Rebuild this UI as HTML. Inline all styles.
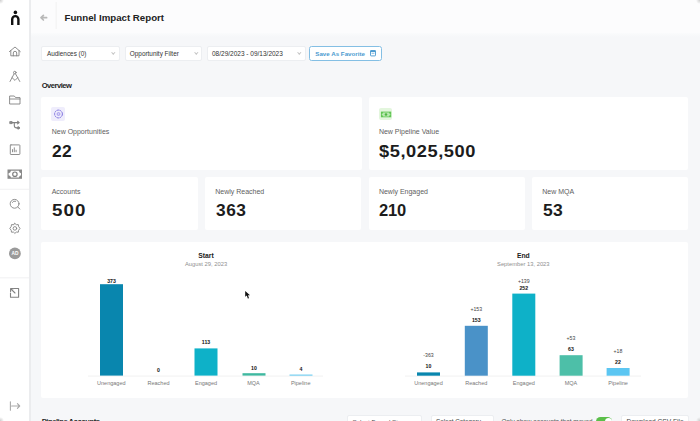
<!DOCTYPE html>
<html><head><meta charset="utf-8">
<style>
*{box-sizing:border-box;margin:0;padding:0}
html,body{width:700px;height:421px;overflow:hidden;background:#f6f7f9;font-family:"Liberation Sans",sans-serif;color:#1a1a1a}
#side{position:absolute;left:0;top:0;width:31px;height:421px;background:#fff;border-right:2px solid #ebecee}
#hdr{position:absolute;left:31px;top:0;width:669px;height:33px;background:#fcfcfd}
#hgrad{position:absolute;left:31px;top:33px;width:669px;height:4px;background:linear-gradient(#fafbfc,#f6f7f9)}
.t{position:absolute;white-space:nowrap;line-height:1}
.dd{position:absolute;top:46px;height:15.3px;background:#fff;border:1px solid #eceef1;border-radius:2px}
.chev{position:absolute;width:2.6px;height:2.6px;border-right:0.8px solid #c4c4c4;border-bottom:0.8px solid #c4c4c4;transform:rotate(45deg)}
.card{position:absolute;background:#fff;border-radius:2px}
.lbl{position:absolute;font-size:7px;color:#5e5e5e;white-space:nowrap;line-height:1}
.num{position:absolute;font-weight:700;color:#1c1c1c;white-space:nowrap;line-height:1}
.bar{position:absolute}
.bl{position:absolute;font-size:5.2px;font-weight:700;color:#111;white-space:nowrap;line-height:1;transform:translateX(-50%)}
.dl{position:absolute;font-size:5.2px;color:#444;white-space:nowrap;line-height:1;transform:translateX(-50%)}
.al{position:absolute;font-size:5.5px;color:#777;white-space:nowrap;line-height:1;transform:translateX(-50%)}
svg{position:absolute;left:0;top:0;overflow:visible}
</style></head><body>
<div id="side"></div>
<div id="hdr"></div><div id="hgrad"></div>
<svg width="700" height="421" viewBox="0 0 700 421">
  <!-- logo -->
  <circle cx="15.4" cy="12.4" r="1.8" fill="#111"/>
  <path d="M12.2 25 V19.2 A3.1 3.1 0 0 1 18.4 19.2 V25" fill="none" stroke="#111" stroke-width="2.4"/>
  <g fill="none" stroke="#828282" stroke-width="0.9" stroke-linejoin="round" stroke-linecap="round">
    <!-- home -->
    <path d="M9.4 51.6 L15 47 L20.3 51.6 M10.8 50.5 V55.8 H19 V50.5 M13.3 55.8 V53 A1.7 1.7 0 0 1 16.7 53 V55.8"/>
    <!-- people/tree -->
    <circle cx="14.8" cy="72.6" r="1.3"/>
    <path d="M14 74 L10 81.5 M15.6 74 L19.8 81.5 M12 77.6 L15 80.4 L17.8 77.6"/>
    <!-- folder -->
    <path d="M10 96 H14.3 L15.6 97.6 H20 V104 H10 Z M10 99 H20"/>
    <!-- connector -->
    <path d="M11.2 122.6 H19 M17.6 121.3 L19.2 122.6 L17.6 123.9 M14.3 122.6 V125.5 Q14.3 127.9 16.8 127.9" stroke-width="1.1"/>
    <rect x="10.1" y="121.6" width="2" height="2" fill="#8a8a8a"/>
    <circle cx="18.3" cy="127.9" r="1.2" fill="#8a8a8a"/>
    <!-- chart -->
    <rect x="10.3" y="144.9" width="9.6" height="9.6" rx="0.6"/>
    <path d="M12.5 151.8 V149.6 M14.3 151.8 V147.8 M16.1 151.8 V150.2"/>
    <!-- money -->
    <rect x="7.5" y="169.5" width="14.5" height="9.3" fill="#8a8a8a" stroke="none"/>
    <path d="M11 170.7 H18.9 Q19.3 172.9 21 173.2 V175.2 Q19.3 175.5 18.9 177.6 H11 Q10.6 175.5 8.6 175.2 V173.2 Q10.6 172.9 11 170.7 Z" fill="#fff" stroke="none"/>
    <circle cx="14.9" cy="174.2" r="2.2" stroke-width="1.2" stroke="#808080"/>
    <!-- search -->
    <circle cx="14.6" cy="203.8" r="4.4"/>
    <path d="M17.8 207 L19.8 209 M12.4 202.4 A2.6 2.6 0 0 1 15.6 201.2"/>
    <!-- gear -->
    <path d="M14.9 223.4 L16.3 224.7 L18.3 224.6 L18.6 226.5 L20 228.4 L18.6 230.3 L18.3 232.2 L16.3 232.1 L14.9 233.4 L13.5 232.1 L11.5 232.2 L11.2 230.3 L9.8 228.4 L11.2 226.5 L11.5 224.6 L13.5 224.7 Z"/>
    <circle cx="14.9" cy="228.4" r="1.8"/>
    <!-- exit -->
    <path d="M10.5 293 V297.2 H18.6 V288.5 H14.2 M10.6 288.6 L15 293 M10.6 291.5 V288.6 H13.5" stroke-width="1.1"/>
    <!-- collapse -->
    <path d="M10.4 401.8 V410.2 M11.6 406 H19.6 M17.4 403.7 L19.7 406 L17.4 408.3" stroke="#a9a9a9" stroke-width="1.1"/>
    <!-- header back arrow & divider -->
    <path d="M46.6 17.7 H41.2 M43.4 15.4 L41 17.7 L43.4 20" stroke="#b8b8b8" stroke-width="1.7"/>
  </g>
  <circle cx="14.9" cy="253.4" r="5.9" fill="#9a9a9a"/>
  <line x1="0" y1="189.3" x2="29" y2="189.3" stroke="#eeeeef" stroke-width="0.8"/>
  <line x1="0" y1="277.8" x2="29" y2="277.8" stroke="#eeeeef" stroke-width="0.8"/>
  <line x1="56.2" y1="2" x2="56.2" y2="29" stroke="#efefef" stroke-width="0.8"/>
</svg>
<div class="t" style="left:11.5px;top:251.6px;font-size:4.8px;font-weight:700;color:#fff">AD</div>

<div class="t" style="left:64.5px;top:13.3px;font-size:9.7px;font-weight:700;color:#222">Funnel Impact Report</div>

<!-- filters -->
<div class="dd" style="left:41px;width:79px"><div class="t" style="left:5px;top:3.7px;font-size:6.4px;color:#333">Audiences (0)</div><div class="chev" style="left:70px;top:4px"></div></div>
<div class="dd" style="left:125px;width:77px"><div class="t" style="left:3.8px;top:3.7px;font-size:6.4px;color:#333">Opportunity Filter</div><div class="chev" style="left:68.5px;top:4px"></div></div>
<div class="dd" style="left:207px;width:99px"><div class="t" style="left:4px;top:3.7px;font-size:6.5px;color:#333">08/29/2023 - 09/13/2023</div><div class="chev" style="left:90px;top:4px"></div></div>
<div class="dd" style="left:309px;width:72.7px;border:1px solid #84bfe4;border-radius:2.5px"><div class="t" style="left:5.3px;top:3.8px;font-size:6.2px;font-weight:700;color:#4c9bd0">Save As Favorite</div>
  <svg width="8" height="8" style="left:59.8px;top:3.4px"><rect x="0.5" y="0.5" width="5" height="5.4" rx="0.5" fill="none" stroke="#4c9bd0" stroke-width="0.9"/><rect x="0.5" y="0.5" width="5" height="1.6" fill="#4c9bd0"/><line x1="1.6" y1="3.4" x2="4.4" y2="3.4" stroke="#4c9bd0" stroke-width="0.6"/></svg>
</div>

<div class="t" style="left:41.7px;top:81.6px;font-size:7.6px;font-weight:700;color:#1e1e1e;letter-spacing:-0.5px">Overview</div>

<!-- cards row 1 -->
<div class="card" style="left:41px;top:97px;width:320.5px;height:73px"></div>
<div class="card" style="left:368.5px;top:97px;width:319.5px;height:73px"></div>
<div class="card" style="left:41px;top:177px;width:156.5px;height:52.5px"></div>
<div class="card" style="left:204.5px;top:177px;width:156.5px;height:52.5px"></div>
<div class="card" style="left:368.5px;top:177px;width:156.5px;height:52.5px"></div>
<div class="card" style="left:531.5px;top:177px;width:156.5px;height:52.5px"></div>

<div style="position:absolute;left:51.1px;top:107px;width:14px;height:13.5px;background:#efedfc;border-radius:2px"></div>
<svg width="700" height="421"><circle cx="58.5" cy="114" r="3.9" fill="none" stroke="#7d70df" stroke-width="1" stroke-dasharray="2.2 0.5"/><circle cx="58.5" cy="114" r="1.5" fill="#d4cef7" stroke="#8a7ee6" stroke-width="0.6"/></svg>
<div style="position:absolute;left:378.9px;top:107.8px;width:13.4px;height:12.2px;background:#e3f6dd;border-radius:2px"></div>
<svg width="700" height="421"><rect x="380.9" y="111.6" width="10.3" height="5.7" fill="#62c655"/><path d="M383.2 112.5 H388.9 Q389.2 113.9 390.3 114 V114.9 Q389.2 115 388.9 116.4 H383.2 Q382.9 115 381.8 114.9 V114 Q382.9 113.9 383.2 112.5 Z" fill="#b9e8b1"/><circle cx="386" cy="114.45" r="1.3" fill="#4fb842"/></svg>

<div class="lbl" style="left:51.7px;top:128.2px">New Opportunities</div>
<div class="num" style="left:51.7px;top:143.3px;font-size:16.5px;letter-spacing:0.3px;transform:scaleX(1.055);transform-origin:0 0">22</div>
<div class="lbl" style="left:378.9px;top:128.2px">New Pipeline Value</div>
<div class="num" style="left:378.9px;top:142.8px;font-size:16.5px;letter-spacing:0.5px;transform:scaleX(1.106);transform-origin:0 0">$5,025,500</div>

<div class="lbl" style="left:51.7px;top:188.2px">Accounts</div>
<div class="num" style="left:52.1px;top:201.8px;font-size:16.5px;letter-spacing:1px;transform:scaleX(1.135);transform-origin:0 0">500</div>
<div class="lbl" style="left:215.2px;top:188.2px">Newly Reached</div>
<div class="num" style="left:215.5px;top:201.8px;font-size:16.5px;letter-spacing:0.5px;transform:scaleX(1.05);transform-origin:0 0">363</div>
<div class="lbl" style="left:378.9px;top:188.2px">Newly Engaged</div>
<div class="num" style="left:379px;top:201.8px;font-size:16.5px;letter-spacing:-0.15px">210</div>
<div class="lbl" style="left:542.2px;top:188.2px">New MQA</div>
<div class="num" style="left:542.8px;top:201.8px;font-size:16.5px;letter-spacing:0.3px;transform:scaleX(1.06);transform-origin:0 0">53</div>

<!-- chart card -->
<div class="card" style="left:41px;top:241.5px;width:647px;height:156.5px"></div>
<div class="t" style="left:206px;top:252.5px;font-size:6.8px;font-weight:700;color:#222;transform:translateX(-50%)">Start</div>
<div class="t" style="left:206px;top:262.1px;font-size:5.8px;color:#8f8f8f;transform:translateX(-50%)">August 29, 2023</div>
<div class="t" style="left:523.3px;top:252.5px;font-size:6.8px;font-weight:700;color:#222;transform:translateX(-50%)">End</div>
<div class="t" style="left:523.3px;top:262.1px;font-size:5.8px;color:#8f8f8f;transform:translateX(-50%)">September 13, 2023</div>

<svg width="700" height="421">
  <line x1="88" y1="376.1" x2="323" y2="376.1" stroke="#ebebeb" stroke-width="0.7"/>
  <line x1="405" y1="376.1" x2="641" y2="376.1" stroke="#ebebeb" stroke-width="0.7"/>
  <!-- start bars -->
  <rect x="100" y="284.2" width="23" height="91.4" fill="#0986ae"/>
  <rect x="194.5" y="348.4" width="23" height="27.2" fill="#0eb1c8"/>
  <rect x="242.5" y="373.2" width="23" height="2.4" fill="#3fb8a0"/>
  <rect x="289.5" y="374.6" width="23" height="1" fill="#5cc6ee"/>
  <!-- end bars -->
  <rect x="417" y="372.4" width="23" height="3.3" fill="#0986ae"/>
  <rect x="464.8" y="325.8" width="23" height="49.9" fill="#4a92c8"/>
  <rect x="512.3" y="293.6" width="23" height="82.1" fill="#0eb1c8"/>
  <rect x="559.6" y="355.2" width="23" height="20.5" fill="#4dbfa8"/>
  <rect x="606.6" y="368" width="23" height="7.7" fill="#5cc6f2"/>
</svg>
<!-- bar labels start -->
<div class="bl" style="left:111.5px;top:279.4px">373</div>
<div class="bl" style="left:158.5px;top:368.2px">0</div>
<div class="bl" style="left:206px;top:340.2px">113</div>
<div class="bl" style="left:254px;top:365.8px">10</div>
<div class="bl" style="left:301px;top:367.0px">4</div>
<div class="al" style="left:111.3px;top:380.7px">Unengaged</div>
<div class="al" style="left:158.5px;top:380.7px">Reached</div>
<div class="al" style="left:206px;top:380.7px">Engaged</div>
<div class="al" style="left:253.5px;top:380.7px">MQA</div>
<div class="al" style="left:300.7px;top:380.7px">Pipeline</div>
<!-- end labels -->
<div class="dl" style="left:428.5px;top:353.2px">-363</div>
<div class="bl" style="left:428.5px;top:364.4px">10</div>
<div class="dl" style="left:476.3px;top:306.6px">+153</div>
<div class="bl" style="left:476.3px;top:318.2px">153</div>
<div class="dl" style="left:523.8px;top:279.4px">+139</div>
<div class="bl" style="left:523.8px;top:285.6px">252</div>
<div class="dl" style="left:571px;top:336.0px">+53</div>
<div class="bl" style="left:571px;top:347.4px">63</div>
<div class="dl" style="left:618px;top:349.3px">+18</div>
<div class="bl" style="left:618px;top:360.4px">22</div>
<div class="al" style="left:428.5px;top:380.7px">Unengaged</div>
<div class="al" style="left:476.3px;top:380.7px">Reached</div>
<div class="al" style="left:523.8px;top:380.7px">Engaged</div>
<div class="al" style="left:571px;top:380.7px">MQA</div>
<div class="al" style="left:618px;top:380.7px">Pipeline</div>

<!-- cursor -->
<svg width="700" height="421"><path d="M245.2 291 L245.2 296.8 L246.8 295.6 L247.8 298.6 L249 298.2 L248 295.3 L250 295.2 Z" fill="#111"/></svg>

<!-- bottom row -->
<div class="t" style="left:41.7px;top:418.1px;font-size:7.6px;font-weight:700;color:#1e1e1e;letter-spacing:-0.45px">Pipeline Accounts</div>
<div class="dd" style="left:347px;top:415px;width:75px;height:15px"><div class="t" style="left:4.5px;top:3px;font-size:6.2px;color:#444">Select Funnel Stage</div><div class="chev" style="left:66px;top:4px"></div></div>
<div class="dd" style="left:430.5px;top:415px;width:63.5px;height:15px"><div class="t" style="left:4.5px;top:3px;font-size:6.3px;color:#444">Select Category</div><div class="chev" style="left:55px;top:4px"></div></div>
<div class="t" style="left:501.4px;top:419.2px;font-size:6.45px;color:#555">Only show accounts that moved</div>
<div style="position:absolute;left:596.3px;top:417px;width:15.7px;height:9px;background:#5bbf4a;border-radius:5px"></div>
<div style="position:absolute;left:604.5px;top:418px;width:7px;height:7px;background:#fff;border-radius:50%"></div>
<div class="dd" style="left:620.6px;top:415px;width:68px;height:15px"><div class="t" style="left:4.8px;top:3px;font-size:6.6px;color:#444">Download CSV File</div></div>
<div style="position:absolute;left:-3px;top:-3px;width:7px;height:7px;border-radius:50%;background:radial-gradient(#d4d4d4,rgba(255,255,255,0) 70%)"></div>
<div style="position:absolute;left:696px;top:-3px;width:7px;height:7px;border-radius:50%;background:radial-gradient(#d4d4d4,rgba(255,255,255,0) 70%)"></div>
<div style="position:absolute;left:-3px;top:417px;width:7px;height:7px;border-radius:50%;background:radial-gradient(#d4d4d4,rgba(255,255,255,0) 70%)"></div>
<div style="position:absolute;left:696px;top:417px;width:7px;height:7px;border-radius:50%;background:radial-gradient(#d4d4d4,rgba(255,255,255,0) 70%)"></div>
</body></html>
